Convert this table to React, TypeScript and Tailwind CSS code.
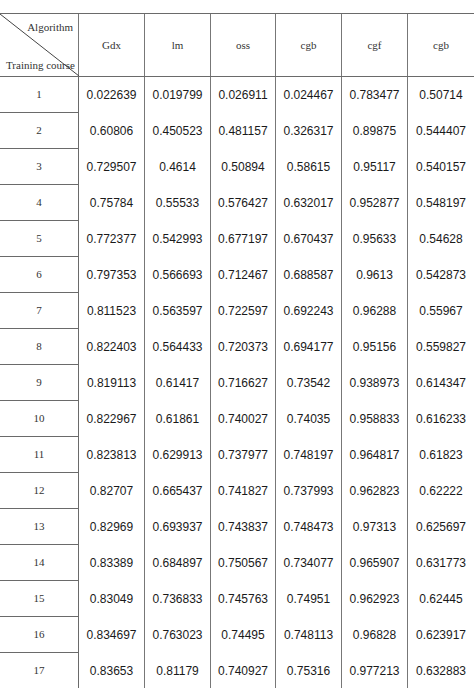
import React from "react";

// columns: first label column then six algorithms
const algos = ["Gdx", "lm", "oss", "cgb", "cgf", "cgb"];
const widths = ["w-[66px]", "w-[66px]", "w-[65px]", "w-[66px]", "w-[66px]", "w-[66px]"];

const rows: string[][] = [
  ["0.022639", "0.019799", "0.026911", "0.024467", "0.783477", "0.50714"],
  ["0.60806", "0.450523", "0.481157", "0.326317", "0.89875", "0.544407"],
  ["0.729507", "0.4614", "0.50894", "0.58615", "0.95117", "0.540157"],
  ["0.75784", "0.55533", "0.576427", "0.632017", "0.952877", "0.548197"],
  ["0.772377", "0.542993", "0.677197", "0.670437", "0.95633", "0.54628"],
  ["0.797353", "0.566693", "0.712467", "0.688587", "0.9613", "0.542873"],
  ["0.811523", "0.563597", "0.722597", "0.692243", "0.96288", "0.55967"],
  ["0.822403", "0.564433", "0.720373", "0.694177", "0.95156", "0.559827"],
  ["0.819113", "0.61417", "0.716627", "0.73542", "0.938973", "0.614347"],
  ["0.822967", "0.61861", "0.740027", "0.74035", "0.958833", "0.616233"],
  ["0.823813", "0.629913", "0.737977", "0.748197", "0.964817", "0.61823"],
  ["0.82707", "0.665437", "0.741827", "0.737993", "0.962823", "0.62222"],
  ["0.82969", "0.693937", "0.743837", "0.748473", "0.97313", "0.625697"],
  ["0.83389", "0.684897", "0.750567", "0.734077", "0.965907", "0.631773"],
  ["0.83049", "0.736833", "0.745763", "0.74951", "0.962923", "0.62445"],
  ["0.834697", "0.763023", "0.74495", "0.748113", "0.96828", "0.623917"],
  ["0.83653", "0.81179", "0.740927", "0.75316", "0.977213", "0.632883"],
];

const serif = "font-['Liberation_Serif','Times_New_Roman',serif]";
const sans = "font-['Liberation_Sans',Arial,sans-serif]";

export default function App() {
  return (
    <div className="w-[474px] h-[688px] overflow-hidden bg-white">
      {/* space where the caption was cropped away */}
      <div className="h-[13px]" />
      <div className="border-t border-[#6a6a6a]">
        {/* header */}
        <div className="flex h-[63px] border-b border-[#6a6a6a]">
          <div className={`relative w-[79px] shrink-0 border-r border-[#777] ${serif} text-[11px] text-[#333]`}>
            <svg className="absolute inset-0" width="79" height="62" viewBox="0 0 79 62">
              <line x1="0" y1="0" x2="79" y2="62" stroke="#444" strokeWidth="1" />
            </svg>
            <div className="absolute right-[5px] top-[5px]">Algorithm</div>
            <div className="absolute left-[6px] bottom-[3px] whitespace-nowrap">Training course</div>
          </div>
          {algos.map((a, i) => (
            <div
              key={i}
              className={`${widths[i]} shrink-0 ${i < 5 ? "border-r border-[#777]" : ""} flex items-center justify-center ${serif} text-[11px] text-[#333]`}
            >
              {a}
            </div>
          ))}
        </div>
        {/* body */}
        {rows.map((r, ri) => (
          <div key={ri} className="flex h-[36px]">
            <div
              className={`w-[79px] shrink-0 border-r border-b border-[#6a6a6a] flex items-center justify-center ${serif} text-[11px] text-[#333]`}
            >
              {ri + 1}
            </div>
            {r.map((v, ci) => (
              <div
                key={ci}
                className={`${widths[ci]} shrink-0 ${ci < 5 ? "border-r border-[#777]" : ""} flex items-center justify-center ${sans} text-[12px] text-[#1a1a1a]`}
              >
                {v}
              </div>
            ))}
          </div>
        ))}
      </div>
    </div>
  );
}
